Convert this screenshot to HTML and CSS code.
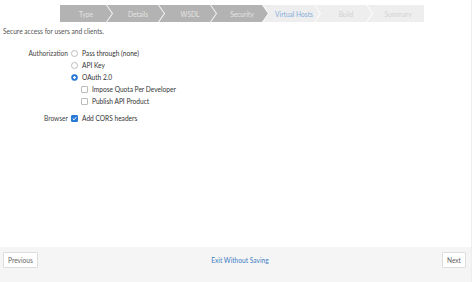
FILE: index.html
```html
<!DOCTYPE html>
<html>

<head>
  <meta charset="utf-8">
  <title>New API Proxy - Virtual Hosts</title>
  <link rel="stylesheet" href="styles.css">
</head>

<body>
  <div class="page">
    <div class="wizard-steps">
      <div class="step done first">Type</div>
      <div class="step done">Details</div>
      <div class="step done">WSDL</div>
      <div class="step done">Security</div>
      <div class="step active">Virtual Hosts</div>
      <div class="step">Build</div>
      <div class="step last">Summary</div>
    </div>

    <p class="intro">Secure access for users and clients.</p>

    <div class="form">
      <div class="form-row">
        <div class="row-label">Authorization</div>
        <div class="options">
          <label class="option"><span class="radio"></span>Pass through (none)</label>
          <label class="option"><span class="radio"></span>API Key</label>
          <label class="option"><span class="radio checked"></span>OAuth 2.0</label>
          <div class="sub-options">
            <label class="option"><span class="checkbox"></span>Impose Quota Per Developer</label>
            <label class="option"><span class="checkbox"></span>Publish API Product</label>
          </div>
        </div>
      </div>

      <div class="form-row browser-row">
        <div class="row-label">Browser</div>
        <div class="options">
          <label class="option">
            <span class="checkbox checked">
              <svg width="5" height="5" viewBox="0 0 10 10"><path d="M1.5 5.2 L4 7.6 L8.6 2.4" fill="none" stroke="#fff" stroke-width="2"/></svg>
            </span>Add CORS headers
          </label>
        </div>
      </div>
    </div>

    <div class="footer">
      <button class="nav-btn">Previous</button>
      <a class="exit-link" href="#">Exit Without Saving</a>
      <button class="nav-btn">Next</button>
    </div>
  </div>
</body>

</html>
```

FILE: styles.css
```css
body {
  margin: 0;
  font-family: Lato, "Open Sans", sans-serif;
  font-size: 6.6px;
  color: #333;
  background-color: #fff;
}

.page {
  width: 471px;
  height: 282px;
  border-right: 1px solid #eee;
  display: flex;
  flex-direction: column;
}

.wizard-steps {
  display: flex;
  margin: 5px 0 0 60px;
  width: 364px;
  height: 17px;
}

.step {
  flex: 1;
  display: flex;
  align-items: center;
  justify-content: center;
  background-color: #eeeeee;
  color: #d2d2d2;
  margin-left: -5px;
  padding-left: 5px;
  clip-path: polygon(0 0, calc(100% - 6px) 0, 100% 50%, calc(100% - 6px) 100%, 0 100%, 6px 50%);
}

.step.first {
  margin-left: 0;
  padding-left: 0;
  clip-path: polygon(0 0, calc(100% - 6px) 0, 100% 50%, calc(100% - 6px) 100%, 0 100%);
}

.step.last {
  clip-path: polygon(0 0, 100% 0, 100% 100%, 0 100%, 6px 50%);
}

.step.done {
  background-color: #b3b3b3;
  color: #e4e4e4;
}

.step.active {
  color: #84addb;
}

.intro {
  margin: 5px 0 0 3px;
  color: #555;
}

.form {
  margin-top: 12px;
}

.form-row {
  display: flex;
}

.row-label {
  width: 71px;
  text-align: right;
  padding-right: 3px;
  box-sizing: border-box;
  line-height: 12px;
  color: #444;
}

.options {
  display: flex;
  flex-direction: column;
}

.sub-options {
  display: flex;
  flex-direction: column;
  padding-left: 10px;
}

.option {
  display: flex;
  align-items: center;
  height: 12px;
  color: #333;
}

.radio,
.checkbox {
  width: 5px;
  height: 5px;
  border: 1px solid #bbb;
  background-color: #fff;
  margin-right: 4px;
  flex-shrink: 0;
  display: flex;
}

.radio {
  border-radius: 50%;
}

.checkbox {
  border-radius: 1px;
}

.radio.checked {
  border-color: #2a7ad5;
  background: radial-gradient(circle, #fff 0 1px, #2a7ad5 1.5px);
}

.checkbox.checked {
  border-color: #2a7ad5;
  background-color: #2a7ad5;
}

.browser-row {
  margin-top: 5px;
}

.footer {
  margin-top: auto;
  height: 35px;
  box-sizing: border-box;
  background-color: #f5f5f5;
  display: flex;
  justify-content: space-between;
  align-items: flex-start;
  padding: 5px 5px 0 3px;
}

.nav-btn {
  font-family: Lato, "Open Sans", sans-serif;
  font-size: 6.6px;
  color: #666;
  background-color: #fff;
  border: 1px solid #ddd;
  border-radius: 1px;
  padding: 0 4px;
  height: 16px;
}

.exit-link {
  color: #3c7cc4;
  text-decoration: none;
  margin-top: 4px;
}
```
